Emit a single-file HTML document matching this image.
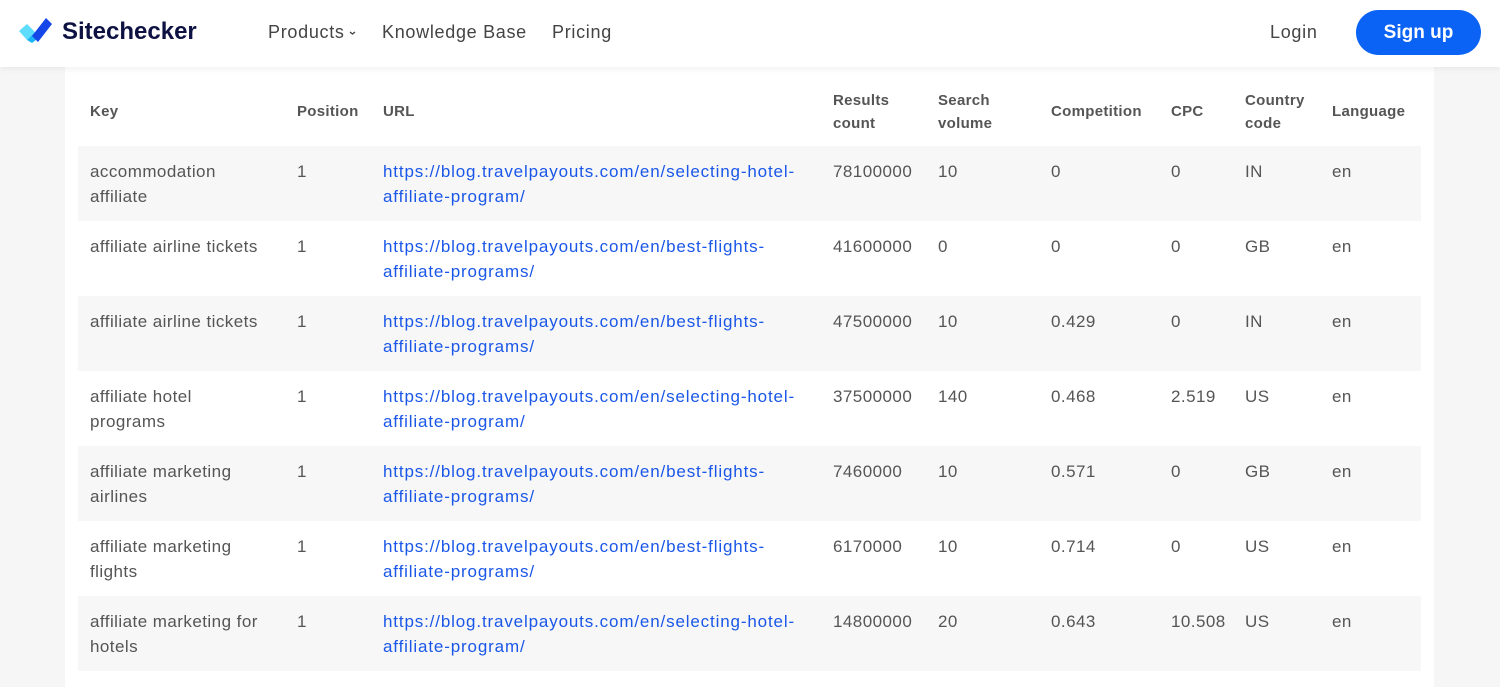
<!DOCTYPE html>
<html><head><style>
body{margin:0;width:1500px;height:676px;overflow:hidden;background:#f6f6f6;font-family:"Liberation Sans",sans-serif;}
.hdr{position:absolute;left:0;top:0;width:1500px;height:67px;background:#fff;box-shadow:0 2px 6px rgba(0,0,0,0.06);z-index:2}
.logo{position:absolute;left:62px;top:18px;font-size:24px;font-weight:bold;color:#0d1243}
.nav{position:absolute;top:22px;font-size:18px;color:#444;letter-spacing:0.7px}
.btn{position:absolute;left:1356px;top:10px;width:125px;height:45px;border-radius:23px;background:#0a63f5;color:#fff;font-weight:bold;font-size:19px;text-align:center;line-height:45px}
.card{position:absolute;left:65px;top:67px;width:1369px;height:620px;background:#fff}
.th{position:absolute;font-size:15px;font-weight:bold;color:#555;line-height:23px;letter-spacing:0.3px}
.row{position:absolute;left:78px;width:1343px;height:75px}
.row.g{background:#f7f7f7}
.c{position:absolute;top:13px;font-size:17px;color:#555;line-height:25px;letter-spacing:0.45px;white-space:nowrap}
.c a{color:#1a57e8;text-decoration:none;letter-spacing:0.85px}
</style></head><body>
<div class="hdr">
<svg style="position:absolute;left:18px;top:15px" width="36" height="30" viewBox="0 0 36 30">
<polygon points="1,16 9,9 17,17 9,25" fill="#5ddcfb"/>
<polygon points="9,25 17,17 22,22 14,28" fill="#19b4f5"/>
<polygon points="14,21 28,3 34,9 20,27" fill="#1546e8"/>
</svg>
<div class="logo">Sitechecker</div>
<div class="nav" style="left:268px">Products<svg width="9" height="6" viewBox="0 0 9 6" style="margin-left:3px;vertical-align:middle"><path d="M2 2 L4.5 4 L7 2" stroke="#444" stroke-width="1.4" fill="none"/></svg></div>
<div class="nav" style="left:382px">Knowledge Base</div>
<div class="nav" style="left:552px">Pricing</div>
<div class="nav" style="left:1270px">Login</div>
<div class="btn">Sign up</div>
</div>
<div class="card"></div>
<div class="th" style="left:90px;top:100px">Key</div>
<div class="th" style="left:297px;top:100px">Position</div>
<div class="th" style="left:383px;top:100px">URL</div>
<div class="th" style="left:833px;top:89px">Results<br>count</div>
<div class="th" style="left:938px;top:89px">Search<br>volume</div>
<div class="th" style="left:1051px;top:100px">Competition</div>
<div class="th" style="left:1171px;top:100px">CPC</div>
<div class="th" style="left:1245px;top:89px">Country<br>code</div>
<div class="th" style="left:1332px;top:100px">Language</div>

<div class="row g" style="top:146px">
<div class="c" style="left:12px">accommodation<br>affiliate</div><div class="c" style="left:219px">1</div>
<div class="c" style="left:305px"><a>https://blog.travelpayouts.com/en/selecting-hotel-<br>affiliate-program/</a></div>
<div class="c" style="left:755px">78100000</div><div class="c" style="left:860px">10</div><div class="c" style="left:973px">0</div><div class="c" style="left:1093px">0</div><div class="c" style="left:1167px">IN</div><div class="c" style="left:1254px">en</div></div>
<div class="row" style="top:221px">
<div class="c" style="left:12px">affiliate airline tickets</div><div class="c" style="left:219px">1</div>
<div class="c" style="left:305px"><a>https://blog.travelpayouts.com/en/best-flights-<br>affiliate-programs/</a></div>
<div class="c" style="left:755px">41600000</div><div class="c" style="left:860px">0</div><div class="c" style="left:973px">0</div><div class="c" style="left:1093px">0</div><div class="c" style="left:1167px">GB</div><div class="c" style="left:1254px">en</div></div>
<div class="row g" style="top:296px">
<div class="c" style="left:12px">affiliate airline tickets</div><div class="c" style="left:219px">1</div>
<div class="c" style="left:305px"><a>https://blog.travelpayouts.com/en/best-flights-<br>affiliate-programs/</a></div>
<div class="c" style="left:755px">47500000</div><div class="c" style="left:860px">10</div><div class="c" style="left:973px">0.429</div><div class="c" style="left:1093px">0</div><div class="c" style="left:1167px">IN</div><div class="c" style="left:1254px">en</div></div>
<div class="row" style="top:371px">
<div class="c" style="left:12px">affiliate hotel<br>programs</div><div class="c" style="left:219px">1</div>
<div class="c" style="left:305px"><a>https://blog.travelpayouts.com/en/selecting-hotel-<br>affiliate-program/</a></div>
<div class="c" style="left:755px">37500000</div><div class="c" style="left:860px">140</div><div class="c" style="left:973px">0.468</div><div class="c" style="left:1093px">2.519</div><div class="c" style="left:1167px">US</div><div class="c" style="left:1254px">en</div></div>
<div class="row g" style="top:446px">
<div class="c" style="left:12px">affiliate marketing<br>airlines</div><div class="c" style="left:219px">1</div>
<div class="c" style="left:305px"><a>https://blog.travelpayouts.com/en/best-flights-<br>affiliate-programs/</a></div>
<div class="c" style="left:755px">7460000</div><div class="c" style="left:860px">10</div><div class="c" style="left:973px">0.571</div><div class="c" style="left:1093px">0</div><div class="c" style="left:1167px">GB</div><div class="c" style="left:1254px">en</div></div>
<div class="row" style="top:521px">
<div class="c" style="left:12px">affiliate marketing<br>flights</div><div class="c" style="left:219px">1</div>
<div class="c" style="left:305px"><a>https://blog.travelpayouts.com/en/best-flights-<br>affiliate-programs/</a></div>
<div class="c" style="left:755px">6170000</div><div class="c" style="left:860px">10</div><div class="c" style="left:973px">0.714</div><div class="c" style="left:1093px">0</div><div class="c" style="left:1167px">US</div><div class="c" style="left:1254px">en</div></div>
<div class="row g" style="top:596px">
<div class="c" style="left:12px">affiliate marketing for<br>hotels</div><div class="c" style="left:219px">1</div>
<div class="c" style="left:305px"><a>https://blog.travelpayouts.com/en/selecting-hotel-<br>affiliate-program/</a></div>
<div class="c" style="left:755px">14800000</div><div class="c" style="left:860px">20</div><div class="c" style="left:973px">0.643</div><div class="c" style="left:1093px">10.508</div><div class="c" style="left:1167px">US</div><div class="c" style="left:1254px">en</div></div>
</body></html>
